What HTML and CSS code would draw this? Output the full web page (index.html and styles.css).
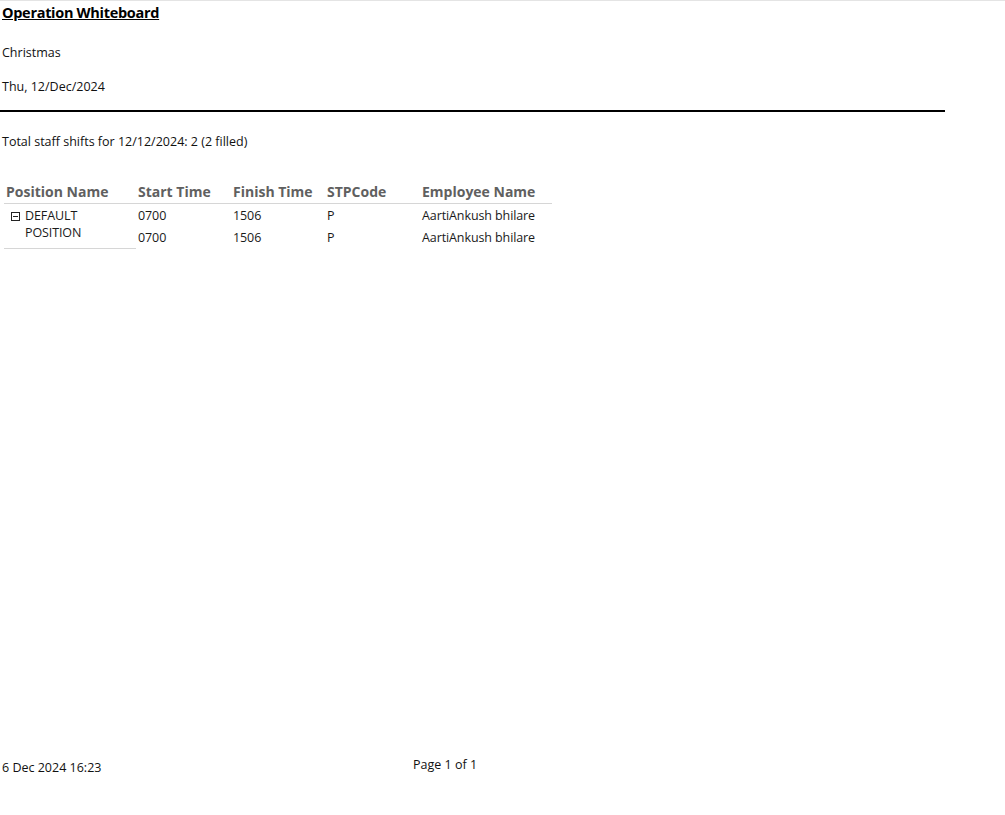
FILE: index.html
```html
<!DOCTYPE html>
<html>
<head>
<meta charset="utf-8">
<title>Operation Whiteboard</title>
<link rel="stylesheet" href="styles.css">
</head>
<body>
<div class="page">
  <div class="report">
    <h1 class="title">Operation Whiteboard</h1>
    <p class="line christmas">Christmas</p>
    <p class="line date">Thu, 12/Dec/2024</p>
    <div class="rule"></div>
    <p class="line total">Total staff shifts for 12/12/2024: 2 (2 filled)</p>
    <table class="grid">
      <thead>
        <tr>
          <th class="c-pos">Position Name</th>
          <th class="c-start">Start Time</th>
          <th class="c-finish">Finish Time</th>
          <th class="c-code">STPCode</th>
          <th class="c-emp">Employee Name</th>
        </tr>
      </thead>
      <tbody>
        <tr class="r1">
          <td class="pos" rowspan="2">
            <div class="pos-inner">
              <span class="toggle"></span>
              <span class="pos-name">DEFAULT POSITION</span>
            </div>
          </td>
          <td>0700</td>
          <td>1506</td>
          <td>P</td>
          <td>AartiAnkush bhilare</td>
        </tr>
        <tr class="r2">
          <td>0700</td>
          <td>1506</td>
          <td>P</td>
          <td>AartiAnkush bhilare</td>
        </tr>
      </tbody>
    </table>
  </div>
  <div class="footer">
    <span class="printed">6 Dec 2024 16:23</span>
    <span class="pager">Page 1 of 1</span>
  </div>
</div>
</body>
</html>
```

FILE: styles.css
```css
html, body {
  margin: 0;
  padding: 0;
  background: #fff;
}
body {
  font-family: "Open Sans", "Noto Sans", sans-serif;
  color: #111;
  font-size: 12.5px;
}
.page {
  min-height: 815px;
  box-sizing: border-box;
  border-top: 1px solid #e4e4e4;
  display: flex;
  flex-direction: column;
}
.report {
  padding-left: 2px;
}
.title {
  margin: 2px 0 0 0;
  font-size: 14.5px;
  font-weight: 700;
  text-decoration: underline;
  line-height: 20px;
  color: #000;
  letter-spacing: -0.3px;
}
.line {
  margin: 0;
  line-height: 16px;
}
.christmas { margin-top: 22px; }
.date { margin-top: 18px; }
.rule {
  margin-top: 15px;
  margin-left: -2px;
  width: 945px;
  height: 2px;
  background: #000;
}
.total { margin-top: 22px; }
.grid {
  margin-top: 31px;
  margin-left: 2px;
  border-collapse: collapse;
  font-size: 12.5px;
}
.grid th {
  text-align: left;
  font-size: 14px;
  font-weight: 700;
  color: #606060;
  letter-spacing: 0;
  padding: 0 2px 2px 2px;
  height: 20px;
  border-bottom: 1px solid #d6d6d6;
  white-space: nowrap;
}
.grid td {
  padding: 0 2px;
  vertical-align: middle;
  color: #1a1a1a;
  letter-spacing: -0.1px;
  white-space: nowrap;
}
.r1 td { height: 23px; }
.r2 td { height: 21px; }
.c-pos { width: 128px; }
.c-start { width: 91px; }
.c-finish { width: 90px; }
.c-code { width: 91px; }
.c-emp { width: 128px; }
.grid td.pos {
  vertical-align: top;
  border-bottom: 1px solid #d6d6d6;
  white-space: normal;
  padding-top: 3px;
}
.pos-inner {
  display: flex;
  align-items: flex-start;
  gap: 5px;
  padding-left: 5px;
}
.toggle {
  flex: none;
  width: 7px;
  height: 7px;
  border: 1px solid #222;
  margin-top: 5px;
  position: relative;
}
.toggle::after {
  content: "";
  position: absolute;
  left: 1px;
  right: 1px;
  top: 3px;
  height: 1px;
  background: #222;
}
.pos-name {
  width: 70px;
  line-height: 17px;
}
.footer {
  margin-top: auto;
  padding: 0 0 39px 2px;
  display: flex;
  align-items: flex-start;
}
.printed {
  width: 411px;
  padding-top: 3px;
}
.pager {
  color: #111;
}
```
